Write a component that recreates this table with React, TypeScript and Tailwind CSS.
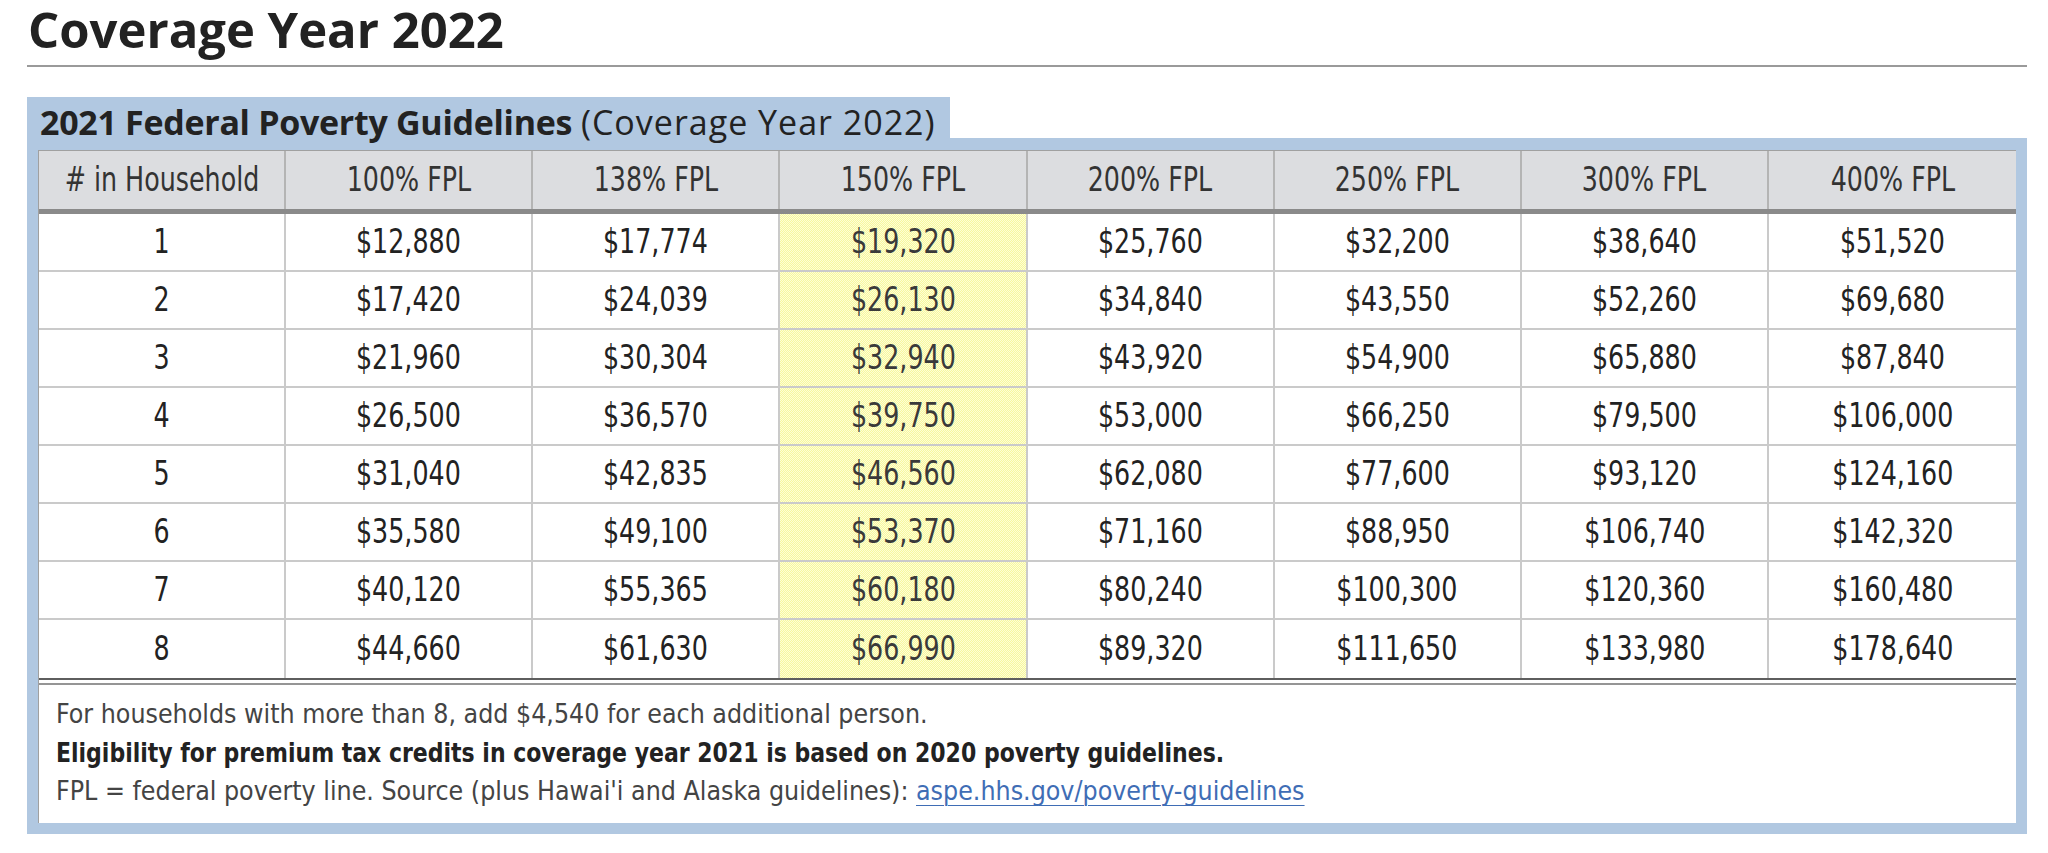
const headers = ["# in Household", "100% FPL", "138% FPL", "150% FPL", "200% FPL", "250% FPL", "300% FPL", "400% FPL"]

// 2021 guidelines, one row per household size
const rows = [
  ["1", "$12,880", "$17,774", "$19,320", "$25,760", "$32,200", "$38,640", "$51,520"],
  ["2", "$17,420", "$24,039", "$26,130", "$34,840", "$43,550", "$52,260", "$69,680"],
  ["3", "$21,960", "$30,304", "$32,940", "$43,920", "$54,900", "$65,880", "$87,840"],
  ["4", "$26,500", "$36,570", "$39,750", "$53,000", "$66,250", "$79,500", "$106,000"],
  ["5", "$31,040", "$42,835", "$46,560", "$62,080", "$77,600", "$93,120", "$124,160"],
  ["6", "$35,580", "$49,100", "$53,370", "$71,160", "$88,950", "$106,740", "$142,320"],
  ["7", "$40,120", "$55,365", "$60,180", "$80,240", "$100,300", "$120,360", "$160,480"],
  ["8", "$44,660", "$61,630", "$66,990", "$89,320", "$111,650", "$133,980", "$178,640"],
]

const condensed = "font-['DejaVu_Sans_Condensed','DejaVu_Sans',sans-serif]"

function Cell({ children }: { children: React.ReactNode }) {
  // the source uses a condensed face, squeeze the glyphs a bit
  return <span className="inline-block scale-x-[0.854] whitespace-nowrap">{children}</span>
}

export default function App() {
  return (
    <div className="min-h-screen bg-white pl-[27px]">
      <div className="w-[2000px]">
        <h2 className="pl-[1px] font-['Open_Sans',sans-serif] text-[49px] font-bold leading-[58px] text-[#222]">
          Coverage Year 2022
        </h2>
        <div className="mt-[7px] h-[2px] bg-[#9a9a9a]" />

        <div className="mt-[30px]">
          <div className="h-[41px] w-[923px] bg-[#b1c8e1] pl-[13px] pt-[8px] font-['Open_Sans',sans-serif] text-[34px] leading-[34px] text-[#222]">
            <span className="font-bold tracking-[-0.3px]">2021 Federal Poverty Guidelines</span>{" "}
            <span className="font-normal tracking-[1px]">(Coverage Year 2022)</span>
          </div>

          <div className="bg-[#b1c8e1] px-[11px] pb-[11px] pt-[12px]">
            <div className={`border-l border-t border-[#a0a0a0] bg-white ${condensed} text-[33px] text-[#222]`}>
              <div className="grid h-[63px] grid-cols-8 border-b-[5px] border-[#8a8a8a] bg-[#dcdde0] text-[#333]">
                {headers.map((h, i) => (
                  <div
                    key={h}
                    className={`flex items-center justify-center ${i < 7 ? "border-r-2 border-[#b4b4b4]" : ""}`}
                  >
                    <Cell>{h}</Cell>
                  </div>
                ))}
              </div>

              {rows.map((row, r) => (
                <div
                  key={row[0]}
                  className={`grid h-[58px] grid-cols-8 ${r < 7 ? "border-b-2 border-[#cacaca]" : ""}`}
                >
                  {row.map((cell, i) => (
                    <div
                      key={i}
                      className={`flex items-center justify-center ${i < 7 ? "border-r-2 border-[#cacaca]" : ""} ${
                        i === 3
                          ? "bg-[#fbfcb3] bg-[image:repeating-conic-gradient(#f7f89e_0%_25%,#fefed6_0%_50%)] bg-size-[2px_2px] text-[#3a3a3a]"
                          : ""
                      }`}
                    >
                      <Cell>{cell}</Cell>
                    </div>
                  ))}
                </div>
              ))}

              <div className="h-[2px] bg-[#5e5e5e]" />
              <div className="h-[3px] bg-white" />
              <div className="h-[2px] bg-[#959595]" />

              <div className="px-[17px] pb-[12px] pt-[10px] text-[26.5px] leading-[38.5px] text-[#444]">
                <p>For households with more than 8, add $4,540 for each additional person.</p>
                <p className="font-bold text-[#222]">
                  <span className="inline-block origin-left scale-x-[0.923] whitespace-nowrap">
                    Eligibility for premium tax credits in coverage year 2021 is based on 2020 poverty guidelines.
                  </span>
                </p>
                <p>
                  FPL = federal poverty line. Source (plus Hawai'i and Alaska guidelines):{" "}
                  <a href="#" className="text-[#3f6db5] underline decoration-1 underline-offset-[5px]">
                    aspe.hhs.gov/poverty-guidelines
                  </a>
                </p>
              </div>
            </div>
          </div>
        </div>
      </div>
    </div>
  )
}
